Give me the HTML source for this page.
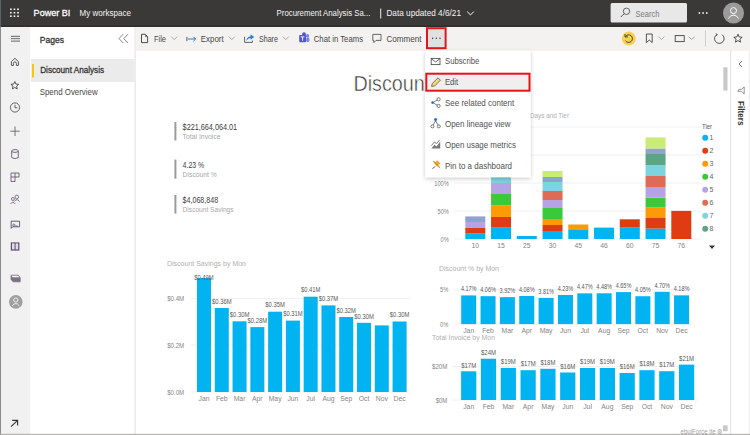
<!DOCTYPE html>
<html><head><meta charset="utf-8"><title>Power BI</title>
<style>html,body{margin:0;padding:0;background:#fff;overflow:hidden}svg{display:block}text{font-family:"Liberation Sans", sans-serif}</style>
</head><body>
<svg width="750" height="435" viewBox="0 0 750 435">
<rect x="0.00" y="0.00" width="750.00" height="435.00" fill="#ffffff" />
<rect x="0.00" y="0.00" width="750.00" height="27.00" fill="#3a3938" />
<rect x="0.00" y="25.60" width="750.00" height="1.40" fill="#2e2d2c" />
<rect x="0.00" y="0.00" width="1.00" height="27.00" fill="#556270" />
<rect x="0.00" y="27.00" width="30.50" height="408.00" fill="#f1f1f1" />
<rect x="0.00" y="27.00" width="1.00" height="408.00" fill="#8c8c8c" />
<rect x="30.50" y="27.00" width="104.50" height="408.00" fill="#ffffff" />
<rect x="134.60" y="27.00" width="1.00" height="408.00" fill="#e1dfdd" />
<rect x="135.60" y="27.00" width="614.40" height="23.90" fill="#f3f2f1" />
<rect x="730.20" y="50.50" width="1.00" height="384.50" fill="#e1dfdd" />
<rect x="748.80" y="50.80" width="1.20" height="384.20" fill="#eeeeee" />
<rect x="10.10" y="8.50" width="1.60" height="1.60" fill="#ffffff" />
<rect x="10.10" y="11.95" width="1.60" height="1.60" fill="#ffffff" />
<rect x="10.10" y="15.40" width="1.60" height="1.60" fill="#ffffff" />
<rect x="13.65" y="8.50" width="1.60" height="1.60" fill="#ffffff" />
<rect x="13.65" y="11.95" width="1.60" height="1.60" fill="#ffffff" />
<rect x="13.65" y="15.40" width="1.60" height="1.60" fill="#ffffff" />
<rect x="17.20" y="8.50" width="1.60" height="1.60" fill="#ffffff" />
<rect x="17.20" y="11.95" width="1.60" height="1.60" fill="#ffffff" />
<rect x="17.20" y="15.40" width="1.60" height="1.60" fill="#ffffff" />
<text x="33.6" y="15.8" font-size="9.6" fill="#ffffff" stroke="#ffffff" stroke-width="0.28" textLength="36.8" lengthAdjust="spacingAndGlyphs" >Power BI</text>
<text x="79.6" y="15.9" font-size="9.2" fill="#f4f4f4" textLength="51.4" lengthAdjust="spacingAndGlyphs" >My workspace</text>
<text x="276.6" y="15.9" font-size="9.2" fill="#f4f4f4" textLength="93.8" lengthAdjust="spacingAndGlyphs" >Procurement Analysis Sa...</text>
<rect x="380.30" y="8.50" width="0.90" height="10.00" fill="#ffffff" />
<text x="386.4" y="15.9" font-size="9.2" fill="#f4f4f4" textLength="74.6" lengthAdjust="spacingAndGlyphs" >Data updated 4/6/21</text>
<path d="M467.2 11.6 L470.5 14.9 L473.8 11.6" stroke="#fff" stroke-width="1" fill="none"/>
<rect x="610.60" y="3.00" width="76.40" height="19.60" fill="#e8e8e8" rx="1.5"/>
<circle cx="626.5" cy="11.3" r="3.2" stroke="#555" stroke-width="0.9" fill="none"/>
<path d="M624.2 13.6 L620.8 17" stroke="#555" stroke-width="1" fill="none"/>
<text x="635.6" y="16.6" font-size="8.8" fill="#7a7a7a" textLength="23.8" lengthAdjust="spacingAndGlyphs" >Search</text>
<circle cx="699.40" cy="13" r="0.9" fill="#e8e8e8"/>
<circle cx="703.10" cy="13" r="0.9" fill="#e8e8e8"/>
<circle cx="706.80" cy="13" r="0.9" fill="#e8e8e8"/>
<circle cx="733.5" cy="13" r="10.5" fill="#9b9b9b"/>
<circle cx="733.5" cy="10.6" r="3" stroke="#fff" stroke-width="1" fill="none"/>
<path d="M728.3 18.3 Q733.5 11.8 738.7 18.3" stroke="#fff" stroke-width="1" fill="none"/>
<rect x="11.00" y="35.85" width="9.00" height="0.90" fill="#555" />
<rect x="11.00" y="38.25" width="9.00" height="0.90" fill="#555" />
<rect x="11.00" y="40.65" width="9.00" height="0.90" fill="#555" />
<path d="M11.4 61.6 L14.9 58.3 L18.4 61.6 V65.4 H16.4 V63.4 A1.5 1.5 0 0 0 13.4 63.4 V65.4 H11.4 Z" stroke="#4e4260" stroke-width="0.9" fill="none" stroke-linejoin="round"/>
<path d="M14.80 81.50 L15.92 84.06 L18.70 84.33 L16.61 86.19 L17.21 88.92 L14.80 87.50 L12.39 88.92 L12.99 86.19 L10.90 84.33 L13.68 84.06 Z" stroke="#444" stroke-width="0.9" fill="none" stroke-linejoin="round"/>
<circle cx="15" cy="107.5" r="4.6" stroke="#555" stroke-width="0.9" fill="none"/>
<path d="M15 104.8 V107.8 H17.3" stroke="#555" stroke-width="0.9" fill="none"/>
<path d="M15 126.5 V136 M10.3 131.2 H19.7" stroke="#666" stroke-width="0.9" fill="none"/>
<ellipse cx="15" cy="151" rx="3.3" ry="1.4" stroke="#6b5a7a" stroke-width="0.9" fill="none"/>
<path d="M11.7 151 V157.6 Q15 159.7 18.3 157.6 V151" stroke="#6b5a7a" stroke-width="0.9" fill="none"/>
<path d="M11 173 H19 V177 H15 V181.5 H11 Z M11 177 H15 M15 173 V177" stroke="#6b5a7a" stroke-width="0.9" fill="none"/>
<circle cx="16.8" cy="197" r="1.8" stroke="#6b5a7a" stroke-width="0.8" fill="none"/>
<circle cx="12.9" cy="199" r="1.5" stroke="#6b5a7a" stroke-width="0.8" fill="none"/>
<path d="M10.5 204 Q12.9 200.5 15.3 204 M14.3 201.4 Q16.8 197.8 19.5 201.6" stroke="#6b5a7a" stroke-width="0.8" fill="none"/>
<path d="M11 221.2 H19.6 V226.8 H12.6 L11.2 228.4 V221.2 Z" stroke="#5a4a6a" stroke-width="0.9" fill="none" stroke-linejoin="round"/>
<circle cx="13.9" cy="225.1" r="1.1" stroke="#5a4a6a" stroke-width="0.7" fill="none"/><path d="M15.4 226 H17.8" stroke="#5a4a6a" stroke-width="0.7"/>
<rect x="10.8" y="242.4" width="8.6" height="8.2" fill="#5e4d6e"/><rect x="12" y="243.4" width="2.6" height="6" fill="#e4dce8"/><rect x="15.6" y="243.4" width="2.6" height="6" fill="#e4dce8"/>
<path d="M11 275.2 H18.2 L20.2 277.8 V281.8 H13 L11 279.2 Z" fill="#777"/>
<path d="M11 275.2 H18.2 L19.6 277.2 H12.6 Z" fill="#fff"/>
<path d="M11 275.2 H18.2 L20.2 277.8 V281.8 H13 L11 279.2 Z" stroke="#8a5f9a" stroke-width="0.8" fill="none" stroke-linejoin="round"/>
<circle cx="15.8" cy="301.9" r="6.8" fill="#a0a0a0"/>
<circle cx="15.8" cy="300" r="2.1" stroke="#fff" stroke-width="0.8" fill="none"/>
<path d="M12.3 305.8 Q15.8 301.2 19.3 305.8" stroke="#fff" stroke-width="0.8" fill="none"/>
<path d="M11 426.6 L17.6 420.4 M12.2 420.4 H17.6 V425.6" stroke="#333" stroke-width="1.1" fill="none"/>
<text x="39.7" y="43.2" font-size="9.4" fill="#323130" stroke="#323130" stroke-width="0.28" textLength="24.3" lengthAdjust="spacingAndGlyphs" >Pages</text>
<path d="M123.2 34.2 L119 38.6 L123.2 43 M128 34.2 L123.8 38.6 L128 43" stroke="#666" stroke-width="0.8" fill="none"/>
<rect x="31.00" y="59.00" width="103.60" height="23.00" fill="#ebebeb" />
<rect x="32.00" y="64.00" width="2.00" height="13.50" fill="#f2c811" />
<text x="40.2" y="72.6" font-size="9" fill="#323130" stroke="#323130" stroke-width="0.28" textLength="63.9" lengthAdjust="spacingAndGlyphs" >Discount Analysis</text>
<text x="39.7" y="95.4" font-size="9" fill="#484644" textLength="58" lengthAdjust="spacingAndGlyphs" >Spend Overview</text>
<path d="M141.5 34.3 H145.3 L147.6 36.6 V42.6 H141.5 Z" stroke="#3a3a3a" stroke-width="0.9" fill="none" stroke-linejoin="round"/><path d="M145 34.4 L147.5 36.9 H145 Z" fill="#777"/>
<text x="154" y="41.7" font-size="9.1" fill="#484644" textLength="12" lengthAdjust="spacingAndGlyphs" >File</text>
<path d="M171.2 36.6 L174.2 39.6 L177.2 36.6" stroke="#888" stroke-width="0.7" fill="none"/>
<path d="M186.9 36.9 V41.1" stroke="#555" stroke-width="1"/><path d="M188 39 H195.6 M193.4 36.8 L195.6 39 L193.4 41.2" stroke="#2b7cd3" stroke-width="1" fill="none"/>
<text x="200.8" y="41.7" font-size="9.1" fill="#484644" textLength="22.8" lengthAdjust="spacingAndGlyphs" >Export</text>
<path d="M228.79999999999998 36.6 L231.79999999999998 39.6 L234.79999999999998 36.6" stroke="#888" stroke-width="0.7" fill="none"/>
<path d="M244.6 36.8 V42.4 H252.4 V40.6" stroke="#555" stroke-width="0.9" fill="none"/><path d="M246.4 41 Q246.8 36.6 250.6 36.2 V34.2 L254.2 37 L250.6 39.8 V37.9 Q248 38 246.4 41 Z" fill="#2b7cd3"/>
<text x="258.9" y="41.7" font-size="9.1" fill="#484644" textLength="19.1" lengthAdjust="spacingAndGlyphs" >Share</text>
<path d="M282.8 36.6 L285.8 39.6 L288.8 36.6" stroke="#888" stroke-width="0.7" fill="none"/>
<rect x="299.2" y="35" width="6.8" height="7.2" rx="0.8" fill="#5059c9"/>
<circle cx="307.5" cy="35.8" r="1.7" fill="#7b83eb"/>
<circle cx="304" cy="34.2" r="1.9" fill="#5059c9"/>
<path d="M300.8 36.9 H304.4 M302.6 36.9 V40.7" stroke="#fff" stroke-width="0.9"/>
<rect x="306.2" y="37.6" width="3.2" height="4.4" rx="1.2" fill="#7b83eb"/>
<text x="313.8" y="41.7" font-size="9.1" fill="#484644" textLength="49.2" lengthAdjust="spacingAndGlyphs" >Chat in Teams</text>
<path d="M372.8 34.4 H381 V40.4 H376 L373.8 42.6 V40.4 H372.8 Z" stroke="#444" stroke-width="0.8" fill="none" stroke-linejoin="round"/>
<text x="386.4" y="41.7" font-size="9.1" fill="#484644" textLength="35.1" lengthAdjust="spacingAndGlyphs" >Comment</text>
<rect x="427.00" y="28.20" width="18.60" height="20.00" fill="#e1e1e1" stroke="#e3151a" stroke-width="2"/>
<circle cx="432.60" cy="38.3" r="0.7" fill="#333"/>
<circle cx="436.30" cy="38.3" r="0.7" fill="#333"/>
<circle cx="440.00" cy="38.3" r="0.7" fill="#333"/>
<circle cx="628.8" cy="38.6" r="7" fill="#f5d34f"/>
<path d="M625.4 36.6 A3.8 3.8 0 1 1 625.5 40.8" stroke="#333" stroke-width="0.9" fill="none"/>
<path d="M625 34 V36.9 H627.9" stroke="#333" stroke-width="0.9" fill="none"/>
<path d="M646.4 34 H652.2 V42.6 L649.3 40 L646.4 42.6 Z" stroke="#444" stroke-width="0.9" fill="none" stroke-linejoin="round"/>
<path d="M658.4000000000001 36.6 L661.4000000000001 39.6 L664.4000000000001 36.6" stroke="#888" stroke-width="0.7" fill="none"/>
<rect x="675.2" y="35.6" width="9" height="6" stroke="#444" stroke-width="0.9" fill="none"/>
<path d="M688.6 36.6 L691.6 39.6 L694.6 36.6" stroke="#888" stroke-width="0.7" fill="none"/>
<rect x="705.20" y="30.50" width="0.80" height="16.00" fill="#c8c6c4" />
<path d="M717 34.4 A4.8 4.8 0 1 0 722 34.6" stroke="#444" stroke-width="0.9" fill="none"/>
<path d="M715.8 33.5 L717.3 34.5 L716.3 36" stroke="#444" stroke-width="0.8" fill="none"/>
<path d="M738.00 34.20 L739.18 36.98 L742.18 37.24 L739.90 39.22 L740.59 42.16 L738.00 40.60 L735.41 42.16 L736.10 39.22 L733.82 37.24 L736.82 36.98 Z" stroke="#444" stroke-width="0.9" fill="none" stroke-linejoin="round"/>
<path d="M742 61 L739 64 L742 67" stroke="#555" stroke-width="0.8" fill="none"/>
<path d="M737.6 87.2 L744.4 87.2 L742 90 V93.6 L740 92.6 V90 Z" stroke="#666" stroke-width="0.7" fill="none" transform="rotate(90 741 90.4)"/>
<text x="0" y="0" font-size="8.8" fill="#323130" font-weight="bold" textLength="24.6" lengthAdjust="spacingAndGlyphs" transform="translate(737.8 100.9) rotate(90)">Filters</text>
<rect x="723.30" y="67.30" width="4.20" height="23.20" fill="#c8c8c8" />
<text x="353.4" y="90.6" font-size="22" fill="#333231" textLength="155" lengthAdjust="spacingAndGlyphs" stroke="#ffffff" stroke-width="0.5">Discount Analysis</text>
<rect x="174.40" y="122.00" width="2.00" height="18.50" fill="#9b9b9b" />
<text x="182.6" y="130.2" font-size="8.2" fill="#3c3c3c" textLength="54.5" lengthAdjust="spacingAndGlyphs" >$221,664,064.01</text>
<text x="182.6" y="139.4" font-size="8.0" fill="#a8a8a8" textLength="38" lengthAdjust="spacingAndGlyphs" >Total Invoice</text>
<rect x="174.40" y="159.60" width="2.00" height="19.10" fill="#9b9b9b" />
<text x="182.6" y="167.79999999999998" font-size="8.2" fill="#3c3c3c" textLength="21.7" lengthAdjust="spacingAndGlyphs" >4.23 %</text>
<text x="182.6" y="177.0" font-size="8.0" fill="#a8a8a8" textLength="34.3" lengthAdjust="spacingAndGlyphs" >Discount %</text>
<rect x="174.40" y="195.00" width="2.00" height="18.60" fill="#9b9b9b" />
<text x="182.6" y="203.2" font-size="8.2" fill="#3c3c3c" textLength="35.5" lengthAdjust="spacingAndGlyphs" >$4,068,848</text>
<text x="182.6" y="212.4" font-size="8.0" fill="#a8a8a8" textLength="51" lengthAdjust="spacingAndGlyphs" >Discount Savings</text>
<text x="167" y="266" font-size="7.6" fill="#b0b0b0" textLength="79" lengthAdjust="spacingAndGlyphs" >Discount Savings by Mon</text>
<line x1="190.5" y1="298.6" x2="410" y2="298.6" stroke="#ececec" stroke-width="0.8"/>
<text x="184.2" y="301.1" font-size="6.8" fill="#858585" text-anchor="end" textLength="17" lengthAdjust="spacingAndGlyphs" >$0.4M</text>
<line x1="190.5" y1="345" x2="410" y2="345" stroke="#ececec" stroke-width="0.8"/>
<text x="184.2" y="347.5" font-size="6.8" fill="#858585" text-anchor="end" textLength="17" lengthAdjust="spacingAndGlyphs" >$0.2M</text>
<line x1="190.5" y1="392" x2="410" y2="392" stroke="#ececec" stroke-width="0.8"/>
<text x="184.2" y="394.5" font-size="6.8" fill="#858585" text-anchor="end" textLength="17" lengthAdjust="spacingAndGlyphs" >$0.0M</text>
<rect x="197.00" y="278.00" width="14.00" height="114.00" fill="#01b4f1" />
<text x="204.0" y="401.2" font-size="6.8" fill="#858585" text-anchor="middle" >Jan</text>
<rect x="214.78" y="308.00" width="14.00" height="84.00" fill="#01b4f1" />
<text x="221.78" y="401.2" font-size="6.8" fill="#858585" text-anchor="middle" >Feb</text>
<rect x="232.56" y="321.30" width="14.00" height="70.70" fill="#01b4f1" />
<text x="239.56" y="401.2" font-size="6.8" fill="#858585" text-anchor="middle" >Mar</text>
<rect x="250.34" y="327.10" width="14.00" height="64.90" fill="#01b4f1" />
<text x="257.34000000000003" y="401.2" font-size="6.8" fill="#858585" text-anchor="middle" >Apr</text>
<rect x="268.12" y="311.70" width="14.00" height="80.30" fill="#01b4f1" />
<text x="275.12" y="401.2" font-size="6.8" fill="#858585" text-anchor="middle" >May</text>
<rect x="285.90" y="320.60" width="14.00" height="71.40" fill="#01b4f1" />
<text x="292.9" y="401.2" font-size="6.8" fill="#858585" text-anchor="middle" >Jun</text>
<rect x="303.68" y="296.70" width="14.00" height="95.30" fill="#01b4f1" />
<text x="310.68" y="401.2" font-size="6.8" fill="#858585" text-anchor="middle" >Jul</text>
<rect x="321.46" y="305.40" width="14.00" height="86.60" fill="#01b4f1" />
<text x="328.46000000000004" y="401.2" font-size="6.8" fill="#858585" text-anchor="middle" >Aug</text>
<rect x="339.24" y="317.00" width="14.00" height="75.00" fill="#01b4f1" />
<text x="346.24" y="401.2" font-size="6.8" fill="#858585" text-anchor="middle" >Sep</text>
<rect x="357.02" y="322.80" width="14.00" height="69.20" fill="#01b4f1" />
<text x="364.02" y="401.2" font-size="6.8" fill="#858585" text-anchor="middle" >Oct</text>
<rect x="374.80" y="325.40" width="14.00" height="66.60" fill="#01b4f1" />
<text x="381.8" y="401.2" font-size="6.8" fill="#858585" text-anchor="middle" >Nov</text>
<rect x="392.58" y="321.50" width="14.00" height="70.50" fill="#01b4f1" />
<text x="399.58000000000004" y="401.2" font-size="6.8" fill="#858585" text-anchor="middle" >Dec</text>
<text x="204.0" y="279.6" font-size="7.1" fill="#5a5a5a" text-anchor="middle" textLength="19.5" lengthAdjust="spacingAndGlyphs" >$0.49M</text>
<text x="221.78" y="303.7" font-size="7.1" fill="#5a5a5a" text-anchor="middle" textLength="19.5" lengthAdjust="spacingAndGlyphs" >$0.36M</text>
<text x="239.56" y="317.0" font-size="7.1" fill="#5a5a5a" text-anchor="middle" textLength="19.5" lengthAdjust="spacingAndGlyphs" >$0.30M</text>
<text x="257.34000000000003" y="322.8" font-size="7.1" fill="#5a5a5a" text-anchor="middle" textLength="19.5" lengthAdjust="spacingAndGlyphs" >$0.28M</text>
<text x="275.12" y="307.4" font-size="7.1" fill="#5a5a5a" text-anchor="middle" textLength="19.5" lengthAdjust="spacingAndGlyphs" >$0.35M</text>
<text x="292.9" y="316.3" font-size="7.1" fill="#5a5a5a" text-anchor="middle" textLength="19.5" lengthAdjust="spacingAndGlyphs" >$0.31M</text>
<text x="310.68" y="292.4" font-size="7.1" fill="#5a5a5a" text-anchor="middle" textLength="19.5" lengthAdjust="spacingAndGlyphs" >$0.41M</text>
<text x="328.46000000000004" y="301.09999999999997" font-size="7.1" fill="#5a5a5a" text-anchor="middle" textLength="19.5" lengthAdjust="spacingAndGlyphs" >$0.37M</text>
<text x="346.24" y="312.7" font-size="7.1" fill="#5a5a5a" text-anchor="middle" textLength="19.5" lengthAdjust="spacingAndGlyphs" >$0.32M</text>
<text x="364.02" y="318.5" font-size="7.1" fill="#5a5a5a" text-anchor="middle" textLength="19.5" lengthAdjust="spacingAndGlyphs" >$0.30M</text>
<text x="399.58000000000004" y="317.2" font-size="7.1" fill="#5a5a5a" text-anchor="middle" textLength="19.5" lengthAdjust="spacingAndGlyphs" >$0.30M</text>
<text x="439" y="271" font-size="7.6" fill="#b0b0b0" textLength="60" lengthAdjust="spacingAndGlyphs" >Discount % by Mon</text>
<line x1="454" y1="289.7" x2="692" y2="289.7" stroke="#ececec" stroke-width="0.8"/>
<text x="448.4" y="292.2" font-size="6.8" fill="#858585" text-anchor="end" textLength="8.3" lengthAdjust="spacingAndGlyphs" >5%</text>
<line x1="454" y1="324.1" x2="692" y2="324.1" stroke="#ececec" stroke-width="0.8"/>
<text x="448.4" y="326.6" font-size="6.8" fill="#858585" text-anchor="end" textLength="8.3" lengthAdjust="spacingAndGlyphs" >0%</text>
<rect x="461.20" y="295.41" width="15.00" height="28.69" fill="#01b4f1" />
<text x="468.7" y="291.21040000000005" font-size="7.3" fill="#5a5a5a" text-anchor="middle" textLength="15.6" lengthAdjust="spacingAndGlyphs" >4.17%</text>
<text x="468.7" y="332.8" font-size="6.8" fill="#858585" text-anchor="middle" >Jan</text>
<rect x="480.55" y="296.17" width="15.00" height="27.93" fill="#01b4f1" />
<text x="488.05" y="291.96720000000005" font-size="7.3" fill="#5a5a5a" text-anchor="middle" textLength="15.6" lengthAdjust="spacingAndGlyphs" >4.06%</text>
<text x="488.05" y="332.8" font-size="6.8" fill="#858585" text-anchor="middle" >Feb</text>
<rect x="499.90" y="297.13" width="15.00" height="26.97" fill="#01b4f1" />
<text x="507.4" y="292.9304" font-size="7.3" fill="#5a5a5a" text-anchor="middle" textLength="15.6" lengthAdjust="spacingAndGlyphs" >3.92%</text>
<text x="507.4" y="332.8" font-size="6.8" fill="#858585" text-anchor="middle" >Mar</text>
<rect x="519.25" y="296.03" width="15.00" height="28.07" fill="#01b4f1" />
<text x="526.75" y="291.8296" font-size="7.3" fill="#5a5a5a" text-anchor="middle" textLength="15.6" lengthAdjust="spacingAndGlyphs" >4.08%</text>
<text x="526.75" y="332.8" font-size="6.8" fill="#858585" text-anchor="middle" >Apr</text>
<rect x="538.60" y="297.89" width="15.00" height="26.21" fill="#01b4f1" />
<text x="546.1" y="293.6872" font-size="7.3" fill="#5a5a5a" text-anchor="middle" textLength="15.6" lengthAdjust="spacingAndGlyphs" >3.81%</text>
<text x="546.1" y="332.8" font-size="6.8" fill="#858585" text-anchor="middle" >May</text>
<rect x="557.95" y="295.00" width="15.00" height="29.10" fill="#01b4f1" />
<text x="565.45" y="290.79760000000005" font-size="7.3" fill="#5a5a5a" text-anchor="middle" textLength="15.6" lengthAdjust="spacingAndGlyphs" >4.23%</text>
<text x="565.45" y="332.8" font-size="6.8" fill="#858585" text-anchor="middle" >Jun</text>
<rect x="577.30" y="293.35" width="15.00" height="30.75" fill="#01b4f1" />
<text x="584.8" y="289.1464" font-size="7.3" fill="#5a5a5a" text-anchor="middle" textLength="15.6" lengthAdjust="spacingAndGlyphs" >4.47%</text>
<text x="584.8" y="332.8" font-size="6.8" fill="#858585" text-anchor="middle" >Jul</text>
<rect x="596.65" y="293.28" width="15.00" height="30.82" fill="#01b4f1" />
<text x="604.15" y="289.0776" font-size="7.3" fill="#5a5a5a" text-anchor="middle" textLength="15.6" lengthAdjust="spacingAndGlyphs" >4.48%</text>
<text x="604.15" y="332.8" font-size="6.8" fill="#858585" text-anchor="middle" >Aug</text>
<rect x="616.00" y="292.11" width="15.00" height="31.99" fill="#01b4f1" />
<text x="623.5" y="287.908" font-size="7.3" fill="#5a5a5a" text-anchor="middle" textLength="15.6" lengthAdjust="spacingAndGlyphs" >4.65%</text>
<text x="623.5" y="332.8" font-size="6.8" fill="#858585" text-anchor="middle" >Sep</text>
<rect x="635.35" y="296.24" width="15.00" height="27.86" fill="#01b4f1" />
<text x="642.85" y="292.03600000000006" font-size="7.3" fill="#5a5a5a" text-anchor="middle" textLength="15.6" lengthAdjust="spacingAndGlyphs" >4.05%</text>
<text x="642.85" y="332.8" font-size="6.8" fill="#858585" text-anchor="middle" >Oct</text>
<rect x="654.70" y="291.76" width="15.00" height="32.34" fill="#01b4f1" />
<text x="662.2" y="287.564" font-size="7.3" fill="#5a5a5a" text-anchor="middle" textLength="15.6" lengthAdjust="spacingAndGlyphs" >4.70%</text>
<text x="662.2" y="332.8" font-size="6.8" fill="#858585" text-anchor="middle" >Nov</text>
<rect x="674.05" y="295.34" width="15.00" height="28.76" fill="#01b4f1" />
<text x="681.55" y="291.14160000000004" font-size="7.3" fill="#5a5a5a" text-anchor="middle" textLength="15.6" lengthAdjust="spacingAndGlyphs" >4.18%</text>
<text x="681.55" y="332.8" font-size="6.8" fill="#858585" text-anchor="middle" >Dec</text>
<text x="432" y="340.4" font-size="7.6" fill="#b0b0b0" textLength="63" lengthAdjust="spacingAndGlyphs" >Total Invoice by Mon</text>
<line x1="452" y1="366.5" x2="698" y2="366.5" stroke="#ececec" stroke-width="0.8"/>
<text x="447.4" y="369.0" font-size="6.8" fill="#858585" text-anchor="end" textLength="15.4" lengthAdjust="spacingAndGlyphs" >$20M</text>
<line x1="452" y1="400" x2="698" y2="400" stroke="#ececec" stroke-width="0.8"/>
<text x="447.4" y="402.5" font-size="6.8" fill="#858585" text-anchor="end" textLength="11.7" lengthAdjust="spacingAndGlyphs" >$0M</text>
<rect x="461.10" y="371.30" width="15.20" height="28.70" fill="#01b4f1" />
<text x="468.70000000000005" y="367.5" font-size="7.1" fill="#5a5a5a" text-anchor="middle" textLength="15" lengthAdjust="spacingAndGlyphs" >$17M</text>
<text x="468.70000000000005" y="408.7" font-size="6.8" fill="#858585" text-anchor="middle" >Jan</text>
<rect x="480.91" y="358.70" width="15.20" height="41.30" fill="#01b4f1" />
<text x="488.51000000000005" y="354.9" font-size="7.1" fill="#5a5a5a" text-anchor="middle" textLength="15" lengthAdjust="spacingAndGlyphs" >$24M</text>
<text x="488.51000000000005" y="408.7" font-size="6.8" fill="#858585" text-anchor="middle" >Feb</text>
<rect x="500.72" y="367.90" width="15.20" height="32.10" fill="#01b4f1" />
<text x="508.32000000000005" y="364.09999999999997" font-size="7.1" fill="#5a5a5a" text-anchor="middle" textLength="15" lengthAdjust="spacingAndGlyphs" >$19M</text>
<text x="508.32000000000005" y="408.7" font-size="6.8" fill="#858585" text-anchor="middle" >Mar</text>
<rect x="520.53" y="370.20" width="15.20" height="29.80" fill="#01b4f1" />
<text x="528.13" y="366.4" font-size="7.1" fill="#5a5a5a" text-anchor="middle" textLength="15" lengthAdjust="spacingAndGlyphs" >$17M</text>
<text x="528.13" y="408.7" font-size="6.8" fill="#858585" text-anchor="middle" >Apr</text>
<rect x="540.34" y="368.80" width="15.20" height="31.20" fill="#01b4f1" />
<text x="547.94" y="365.0" font-size="7.1" fill="#5a5a5a" text-anchor="middle" textLength="15" lengthAdjust="spacingAndGlyphs" >$18M</text>
<text x="547.94" y="408.7" font-size="6.8" fill="#858585" text-anchor="middle" >May</text>
<rect x="560.15" y="372.50" width="15.20" height="27.50" fill="#01b4f1" />
<text x="567.75" y="368.7" font-size="7.1" fill="#5a5a5a" text-anchor="middle" textLength="15" lengthAdjust="spacingAndGlyphs" >$16M</text>
<text x="567.75" y="408.7" font-size="6.8" fill="#858585" text-anchor="middle" >Jun</text>
<rect x="579.96" y="368.00" width="15.20" height="32.00" fill="#01b4f1" />
<text x="587.5600000000001" y="364.2" font-size="7.1" fill="#5a5a5a" text-anchor="middle" textLength="15" lengthAdjust="spacingAndGlyphs" >$19M</text>
<text x="587.5600000000001" y="408.7" font-size="6.8" fill="#858585" text-anchor="middle" >Jul</text>
<rect x="599.77" y="368.00" width="15.20" height="32.00" fill="#01b4f1" />
<text x="607.37" y="364.2" font-size="7.1" fill="#5a5a5a" text-anchor="middle" textLength="15" lengthAdjust="spacingAndGlyphs" >$19M</text>
<text x="607.37" y="408.7" font-size="6.8" fill="#858585" text-anchor="middle" >Aug</text>
<rect x="619.58" y="373.00" width="15.20" height="27.00" fill="#01b4f1" />
<text x="627.1800000000001" y="369.2" font-size="7.1" fill="#5a5a5a" text-anchor="middle" textLength="15" lengthAdjust="spacingAndGlyphs" >$16M</text>
<text x="627.1800000000001" y="408.7" font-size="6.8" fill="#858585" text-anchor="middle" >Sep</text>
<rect x="639.39" y="370.20" width="15.20" height="29.80" fill="#01b4f1" />
<text x="646.99" y="366.4" font-size="7.1" fill="#5a5a5a" text-anchor="middle" textLength="15" lengthAdjust="spacingAndGlyphs" >$18M</text>
<text x="646.99" y="408.7" font-size="6.8" fill="#858585" text-anchor="middle" >Oct</text>
<rect x="659.20" y="371.20" width="15.20" height="28.80" fill="#01b4f1" />
<text x="666.8000000000001" y="367.4" font-size="7.1" fill="#5a5a5a" text-anchor="middle" textLength="15" lengthAdjust="spacingAndGlyphs" >$17M</text>
<text x="666.8000000000001" y="408.7" font-size="6.8" fill="#858585" text-anchor="middle" >Nov</text>
<rect x="679.01" y="364.60" width="15.20" height="35.40" fill="#01b4f1" />
<text x="686.61" y="360.8" font-size="7.1" fill="#5a5a5a" text-anchor="middle" textLength="15" lengthAdjust="spacingAndGlyphs" >$21M</text>
<text x="686.61" y="408.7" font-size="6.8" fill="#858585" text-anchor="middle" >Dec</text>
<text x="530" y="117.8" font-size="7.8" fill="#b0b0b0" textLength="39" lengthAdjust="spacingAndGlyphs" >Days and Tier</text>
<text x="528" y="117.8" font-size="7.8" fill="#b0b0b0" text-anchor="end" >Discount % by </text>
<line x1="454.4" y1="127" x2="701.5" y2="127" stroke="#ececec" stroke-width="0.8"/>
<line x1="454.4" y1="155" x2="701.5" y2="155" stroke="#ececec" stroke-width="0.8"/>
<line x1="454.4" y1="183" x2="701.5" y2="183" stroke="#ececec" stroke-width="0.8"/>
<line x1="454.4" y1="211" x2="701.5" y2="211" stroke="#ececec" stroke-width="0.8"/>
<line x1="454.4" y1="239" x2="701.5" y2="239" stroke="#ececec" stroke-width="0.8"/>
<text x="448.9" y="185.5" font-size="6.8" fill="#858585" text-anchor="end" textLength="14.7" lengthAdjust="spacingAndGlyphs" >100%</text>
<text x="448.9" y="213.5" font-size="6.8" fill="#858585" text-anchor="end" textLength="11.4" lengthAdjust="spacingAndGlyphs" >50%</text>
<text x="448.9" y="241.5" font-size="6.8" fill="#858585" text-anchor="end" textLength="8.3" lengthAdjust="spacingAndGlyphs" >0%</text>
<rect x="465.30" y="233.20" width="20.00" height="5.80" fill="#01b4f1" />
<rect x="465.30" y="228.00" width="20.00" height="5.20" fill="#e03c14" />
<rect x="465.30" y="222.00" width="20.00" height="6.00" fill="#b6a3e4" />
<rect x="465.30" y="216.40" width="20.00" height="5.60" fill="#8fa3d1" />
<text x="475.3" y="248.2" font-size="6.8" fill="#858585" text-anchor="middle" >10</text>
<rect x="491.05" y="227.60" width="20.00" height="11.40" fill="#01b4f1" />
<rect x="491.05" y="217.00" width="20.00" height="10.60" fill="#e03c14" />
<rect x="491.05" y="205.40" width="20.00" height="11.60" fill="#fd9a06" />
<rect x="491.05" y="194.00" width="20.00" height="11.40" fill="#3bc83a" />
<rect x="491.05" y="183.00" width="20.00" height="11.00" fill="#b6a3e4" />
<rect x="491.05" y="171.00" width="20.00" height="12.00" fill="#7dd4dc" />
<text x="501.05" y="248.2" font-size="6.8" fill="#858585" text-anchor="middle" >15</text>
<rect x="516.80" y="236.00" width="20.00" height="3.00" fill="#01b4f1" />
<text x="526.8" y="248.2" font-size="6.8" fill="#858585" text-anchor="middle" >25</text>
<rect x="542.55" y="231.00" width="20.00" height="8.00" fill="#01b4f1" />
<rect x="542.55" y="225.00" width="20.00" height="6.00" fill="#e03c14" />
<rect x="542.55" y="219.00" width="20.00" height="6.00" fill="#fd9a06" />
<rect x="542.55" y="208.00" width="20.00" height="11.00" fill="#3bc83a" />
<rect x="542.55" y="200.00" width="20.00" height="8.00" fill="#b6a3e4" />
<rect x="542.55" y="191.00" width="20.00" height="9.00" fill="#dd6b56" />
<rect x="542.55" y="182.00" width="20.00" height="9.00" fill="#7dd4dc" />
<rect x="542.55" y="177.00" width="20.00" height="5.00" fill="#8fa3d1" />
<rect x="542.55" y="171.00" width="20.00" height="6.00" fill="#c8ec74" />
<text x="552.55" y="248.2" font-size="6.8" fill="#858585" text-anchor="middle" >30</text>
<rect x="568.30" y="230.00" width="20.00" height="9.00" fill="#01b4f1" />
<rect x="568.30" y="224.50" width="20.00" height="5.50" fill="#fd9a06" />
<text x="578.3" y="248.2" font-size="6.8" fill="#858585" text-anchor="middle" >45</text>
<rect x="594.05" y="227.60" width="20.00" height="11.40" fill="#01b4f1" />
<text x="604.05" y="248.2" font-size="6.8" fill="#858585" text-anchor="middle" >46</text>
<rect x="619.80" y="227.60" width="20.00" height="11.40" fill="#01b4f1" />
<rect x="619.80" y="219.30" width="20.00" height="8.30" fill="#e03c14" />
<text x="629.8" y="248.2" font-size="6.8" fill="#858585" text-anchor="middle" >60</text>
<rect x="645.55" y="228.60" width="20.00" height="10.40" fill="#01b4f1" />
<rect x="645.55" y="218.00" width="20.00" height="10.60" fill="#e03c14" />
<rect x="645.55" y="207.50" width="20.00" height="10.50" fill="#fd9a06" />
<rect x="645.55" y="197.50" width="20.00" height="10.00" fill="#3bc83a" />
<rect x="645.55" y="187.00" width="20.00" height="10.50" fill="#b6a3e4" />
<rect x="645.55" y="176.00" width="20.00" height="11.00" fill="#dd6b56" />
<rect x="645.55" y="165.00" width="20.00" height="11.00" fill="#7dd4dc" />
<rect x="645.55" y="154.00" width="20.00" height="11.00" fill="#5ba583" />
<rect x="645.55" y="148.50" width="20.00" height="5.50" fill="#8fa3d1" />
<rect x="645.55" y="137.40" width="20.00" height="11.10" fill="#c8ec74" />
<text x="655.55" y="248.2" font-size="6.8" fill="#858585" text-anchor="middle" >75</text>
<rect x="671.30" y="210.90" width="20.00" height="28.10" fill="#e03c14" />
<text x="681.3" y="248.2" font-size="6.8" fill="#858585" text-anchor="middle" >76</text>
<text x="702" y="129.2" font-size="7.2" fill="#555" textLength="10" lengthAdjust="spacingAndGlyphs" >Tier</text>
<circle cx="705.2" cy="137.70" r="2.95" fill="#01b4f1"/>
<text x="709.6" y="140.2" font-size="7" fill="#666" >1</text>
<circle cx="705.2" cy="150.70" r="2.95" fill="#e03c14"/>
<text x="709.6" y="153.2" font-size="7" fill="#666" >2</text>
<circle cx="705.2" cy="163.70" r="2.95" fill="#fd9a06"/>
<text x="709.6" y="166.2" font-size="7" fill="#666" >3</text>
<circle cx="705.2" cy="176.70" r="2.95" fill="#3bc83a"/>
<text x="709.6" y="179.2" font-size="7" fill="#666" >4</text>
<circle cx="705.2" cy="189.70" r="2.95" fill="#b6a3e4"/>
<text x="709.6" y="192.2" font-size="7" fill="#666" >5</text>
<circle cx="705.2" cy="202.70" r="2.95" fill="#dd6b56"/>
<text x="709.6" y="205.2" font-size="7" fill="#666" >6</text>
<circle cx="705.2" cy="215.70" r="2.95" fill="#7dd4dc"/>
<text x="709.6" y="218.2" font-size="7" fill="#666" >7</text>
<circle cx="705.2" cy="228.70" r="2.95" fill="#5ba583"/>
<text x="709.6" y="231.2" font-size="7" fill="#666" >8</text>
<path d="M709 245.6 H715 L712 249 Z" fill="#333"/>
<text x="680.5" y="434.4" font-size="7.2" fill="#a0a0a0" textLength="42" lengthAdjust="spacingAndGlyphs" >ebuiForce ite ⚙</text>
<rect x="723.00" y="425.40" width="4.60" height="5.80" fill="#c8c8c8" />
<rect x="0.00" y="433.80" width="750.00" height="1.20" fill="#b8b6b4" />
<defs><filter id="sh" x="-20%" y="-20%" width="140%" height="140%"><feDropShadow dx="0" dy="1.5" stdDeviation="2" flood-color="#000" flood-opacity="0.22"/></filter></defs>
<rect x="425.30" y="50.60" width="105.20" height="126.60" fill="#ffffff" filter="url(#sh)"/>
<rect x="426.30" y="73.70" width="103.20" height="17.00" fill="#efefef" stroke="#e3151a" stroke-width="2"/>
<text x="445" y="64.2" font-size="8.6" fill="#505050" textLength="34.3" lengthAdjust="spacingAndGlyphs" >Subscribe</text>
<text x="445" y="85.10000000000001" font-size="8.6" fill="#505050" textLength="13.2" lengthAdjust="spacingAndGlyphs" >Edit</text>
<text x="445" y="105.9" font-size="8.6" fill="#505050" textLength="69.2" lengthAdjust="spacingAndGlyphs" >See related content</text>
<text x="445" y="126.80000000000001" font-size="8.6" fill="#505050" textLength="65.5" lengthAdjust="spacingAndGlyphs" >Open lineage view</text>
<text x="445" y="148.0" font-size="8.6" fill="#505050" textLength="70.9" lengthAdjust="spacingAndGlyphs" >Open usage metrics</text>
<text x="445" y="168.5" font-size="8.6" fill="#505050" textLength="67.0" lengthAdjust="spacingAndGlyphs" >Pin to a dashboard</text>
<rect x="431.2" y="58.4" width="8.8" height="6.2" stroke="#555" stroke-width="0.9" fill="none"/>
<path d="M431.2 58.6 L435.6 62 L440 58.6" stroke="#555" stroke-width="0.9" fill="none"/>
<path d="M431.6 86.4 L432.2 83.6 L438 77.8 L440.4 80.2 L434.6 86 Z" stroke="#555" stroke-width="0.8" fill="#f7d774" stroke-linejoin="round"/>
<circle cx="432.6" cy="102.6" r="1.3" fill="#1f6fd1"/><circle cx="438.6" cy="99.3" r="1.6" stroke="#444" stroke-width="0.7" fill="none"/><circle cx="438.6" cy="105.9" r="1.6" stroke="#444" stroke-width="0.7" fill="none"/><path d="M433.6 102.2 L437.2 99.9 M433.6 103 L437.2 105.3" stroke="#444" stroke-width="0.7"/>
<circle cx="435.6" cy="119.6" r="1.5" fill="#1f6fd1"/><circle cx="432.4" cy="126.4" r="1.5" stroke="#444" stroke-width="0.7" fill="none"/><circle cx="438.8" cy="126.4" r="1.5" stroke="#444" stroke-width="0.7" fill="none"/><path d="M435.6 121 L433 125 M435.6 121 L438.2 125" stroke="#444" stroke-width="0.7"/>
<path d="M431.4 148.6 L434.4 144.8 L436.6 146.4 L440.2 141.6 V148.6 Z" fill="#777"/><path d="M431.4 145.6 L434.4 142 L436.6 143.6 L439.6 140" stroke="#555" stroke-width="0.8" fill="none"/>
<path d="M432.6 168.8 L435 166.4" stroke="#333" stroke-width="0.9"/><path d="M434.2 163.6 L437.2 160.2 L440.4 163.4 L437 166.4 Z" fill="#f0a830"/><path d="M433.4 164.2 L439.8 170.6" stroke="#e08a20" stroke-width="1.2" transform="translate(0 -3)"/>
</svg>
</body></html>
